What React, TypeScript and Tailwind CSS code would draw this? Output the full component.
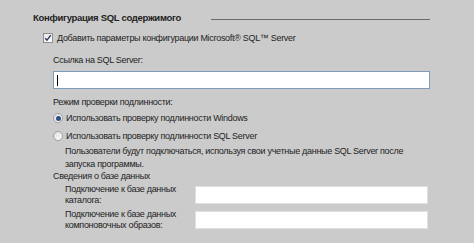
import React from "react";

const font = { fontFamily: '"Liberation Sans", Arial, sans-serif' };

function Checkbox() {
  return (
    <div className="w-[10px] h-[10px] border border-[#8e8f8f] bg-gradient-to-br from-[#e6e6e6] to-white flex items-center justify-center shrink-0">
      <svg width="8" height="8" viewBox="0 0 8 8">
        <path d="M1.2 4.2 L3 6.2 L6.8 1.2" fill="none" stroke="#2a3a5a" strokeWidth="1.4" />
      </svg>
    </div>
  );
}

function Radio({ checked }: { checked?: boolean }) {
  return (
    <div className="w-[10px] h-[10px] rounded-full border border-[#a0a0a0] bg-gradient-to-br from-[#dcdcdc] to-white flex items-center justify-center shrink-0">
      {checked && <div className="w-[5px] h-[5px] rounded-full bg-[#2a4f86]" />}
    </div>
  );
}

export default function App() {
  return (
    <div style={font} className="w-[474px] h-[243px] bg-[#cbcbcb] text-[#1e1e1e] text-[9px] tracking-[-0.3px] leading-[12px] overflow-hidden">
      <div className="pl-[33px] pr-[44px] pt-[11px] flex items-center gap-[30px]">
        <span className="font-bold text-[9.5px] leading-[13px] whitespace-nowrap">Конфигурация SQL содержимого</span>
        <div className="flex-1 h-px bg-[#6b6b6b] mt-[3px]" />
      </div>
      <div className="pl-[43px] pt-[8px] flex items-center gap-[4px]">
        <Checkbox />
        <span>Добавить параметры конфигурации Microsoft® SQL™ Server</span>
      </div>
      <div className="pl-[53px] pr-[44px] pt-[10px]">
        <div>Ссылка на SQL Server:</div>
        <div className="mt-[5px] h-[18px] border border-[#7f9db9] bg-white flex items-center pl-[3px]">
          <div className="w-px h-[11px] bg-black" />
        </div>
        <div className="mt-[7px]">Режим проверки подлинности:</div>
        <div className="mt-[4px] flex items-center gap-[3px]">
          <Radio checked />
          <span>Использовать проверку подлинности Windows</span>
        </div>
        <div className="mt-[6px] flex items-center gap-[3px]">
          <Radio />
          <span>Использовать проверку подлинности SQL Server</span>
        </div>
        <div className="pl-[12px] mt-[3px] leading-[12.5px]">
          Пользователи будут подключаться, используя свои учетные данные SQL Server после
          <br />
          запуска программы.
        </div>
        <div>Сведения о базе данных</div>
        <div className="pl-[12px] mt-[2px] flex items-center">
          <div className="w-[130px] leading-[10.5px]">
            Подключение к базе данных
            <br />
            каталога:
          </div>
          <div className="flex-1 h-[18px] bg-white border border-[#e0e0e0] mr-[2px]" />
        </div>
        <div className="pl-[12px] mt-[4px] flex items-center">
          <div className="w-[130px] leading-[10.5px]">
            Подключение к базе данных
            <br />
            компоновочных образов:
          </div>
          <div className="flex-1 h-[18px] bg-white border border-[#e0e0e0] mr-[2px]" />
        </div>
      </div>
    </div>
  );
}
